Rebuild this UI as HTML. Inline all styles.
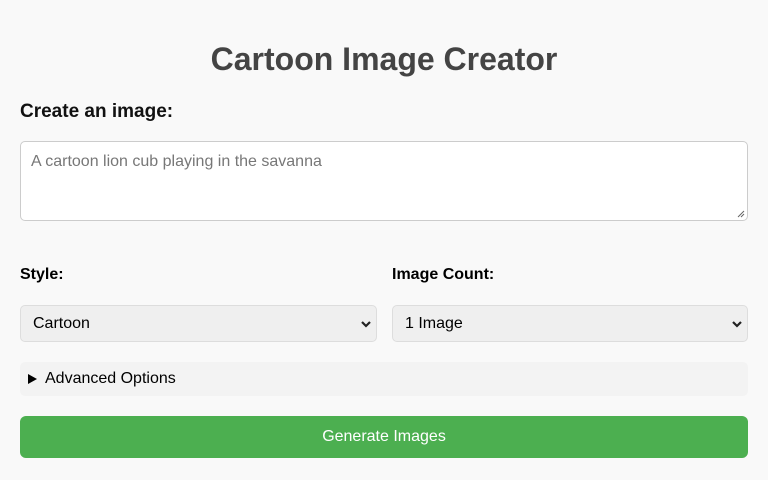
<!DOCTYPE html>
<html><head><style>
body{margin:0;background:#f9f9f9;font-family:"Liberation Sans",sans-serif;width:768px;height:480px;position:relative;overflow:hidden}
.a{position:absolute}
h1{position:absolute;top:40px;left:0;width:768px;text-align:center;margin:0;font-size:32px;color:#444;font-weight:bold;line-height:38px}
.sel{background:#efefef;border:1px solid #ddd;border-radius:5px;height:37px;box-sizing:border-box;font-size:16px;line-height:35px;padding-left:12px;color:#000}
</style></head><body>
<h1>Cartoon Image Creator</h1>
<div class="a" style="left:20px;top:101px;font-size:19px;font-weight:bold;color:#111">Create an image:</div>
<div class="a" style="left:20px;top:141px;width:728px;height:80px;box-sizing:border-box;border:1px solid #ccc;border-radius:5px;background:#fff;padding:11px 10px;font-size:16px;color:#777">A cartoon lion cub playing in the savanna
<svg class="a" style="right:2px;bottom:2px" width="8" height="8"><path d="M7 1L1 7M7 4L4 7" stroke="#666" stroke-width="1"/></svg></div>
<div class="a" style="left:20px;top:266px;font-size:16px;font-weight:bold">Style:</div>
<div class="a" style="left:392px;top:266px;font-size:16px;font-weight:bold">Image Count:</div>
<div class="a sel" style="left:20px;top:305px;width:357px">Cartoon<svg class="a" style="right:4px;top:14px" width="12" height="8"><path d="M2 2L6 6L10 2" stroke="#222" stroke-width="2.2" fill="none"/></svg></div>
<div class="a sel" style="left:392px;top:305px;width:356px">1 Image<svg class="a" style="right:4px;top:14px" width="12" height="8"><path d="M2 2L6 6L10 2" stroke="#222" stroke-width="2.2" fill="none"/></svg></div>
<div class="a" style="left:20px;top:362px;width:728px;height:34px;background:#f3f3f3;border-radius:5px;font-size:16px;line-height:34px">
<svg class="a" style="left:8px;top:12px" width="10" height="11"><path d="M0 0L9 5L0 10Z" fill="#000"/></svg><span style="position:absolute;left:25px">Advanced Options</span></div>
<div class="a" style="left:20px;top:416px;width:728px;height:42px;background:#4caf50;border-radius:6px;color:#fff;text-align:center;line-height:42px;font-size:16px">Generate Images</div>
</body></html>
